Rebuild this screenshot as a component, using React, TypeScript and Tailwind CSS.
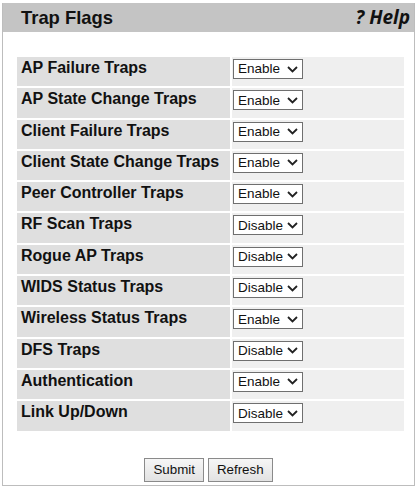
const rows: [string, string][] = [
  ["AP Failure Traps", "Enable"],
  ["AP State Change Traps", "Enable"],
  ["Client Failure Traps", "Enable"],
  ["Client State Change Traps", "Enable"],
  ["Peer Controller Traps", "Enable"],
  ["RF Scan Traps", "Disable"],
  ["Rogue AP Traps", "Disable"],
  ["WIDS Status Traps", "Disable"],
  ["Wireless Status Traps", "Enable"],
  ["DFS Traps", "Disable"],
  ["Authentication", "Enable"],
  ["Link Up/Down", "Disable"],
];

function FakeSelect({ value }: { value: string }) {
  return (
    <div className="mt-[2px] ml-[1px] flex h-[20px] w-[70px] items-center justify-between border border-[#6f6f6f] bg-white pl-[4px] pr-[3px] text-[13.5px] leading-none text-[#111]">
      <span>{value}</span>
      <svg width="11" height="7" viewBox="0 0 11 7" className="mr-[1px]">
        <path d="M1 1 L5.5 5.5 L10 1" fill="none" stroke="#222" strokeWidth="1.8" />
      </svg>
    </div>
  );
}

export default function App() {
  return (
    <div className="min-h-[488px] bg-white pl-[2px] pt-[3px] font-['Liberation_Sans',Arial,sans-serif]">
      <div className="w-[413px] border-x border-b border-[#bdbdbd]">
        <div className="flex h-[29px] items-center justify-between bg-[#c4c4c4] pl-[18px] pr-[4px]">
          <span className="text-[18.4px] font-bold text-[#111]">Trap Flags</span>
          <span className="font-['Open_Sans',sans-serif] text-[19px] font-bold italic text-[#111]">? Help</span>
        </div>

        <div className="pl-[14px] pt-[25px]">
          <div className="grid w-[387px] grid-cols-[213px_172px] gap-[2px]">
            {rows.map(([label, value]) => (
              <div key={label} className="contents">
                <div className="h-[29.3px] bg-[#dfdfdf] pl-[4px] pt-[2px] text-[16px] font-bold leading-[18px] text-[#111]">
                  {label}
                </div>
                <div className="h-[29.3px] bg-[#efefef]">
                  <FakeSelect value={value} />
                </div>
              </div>
            ))}
          </div>
        </div>

        <div className="flex justify-center gap-[4px] pb-[3px] pt-[27px]">
          <button className="h-[24px] border border-[#8a8a8a] bg-gradient-to-b from-[#f6f6f6] to-[#e2e2e2] px-[8px] text-[13.33px] text-[#111]">
            Submit
          </button>
          <button className="h-[24px] border border-[#8a8a8a] bg-gradient-to-b from-[#f6f6f6] to-[#e2e2e2] px-[8px] text-[13.33px] text-[#111]">
            Refresh
          </button>
        </div>
      </div>
    </div>
  );
}
